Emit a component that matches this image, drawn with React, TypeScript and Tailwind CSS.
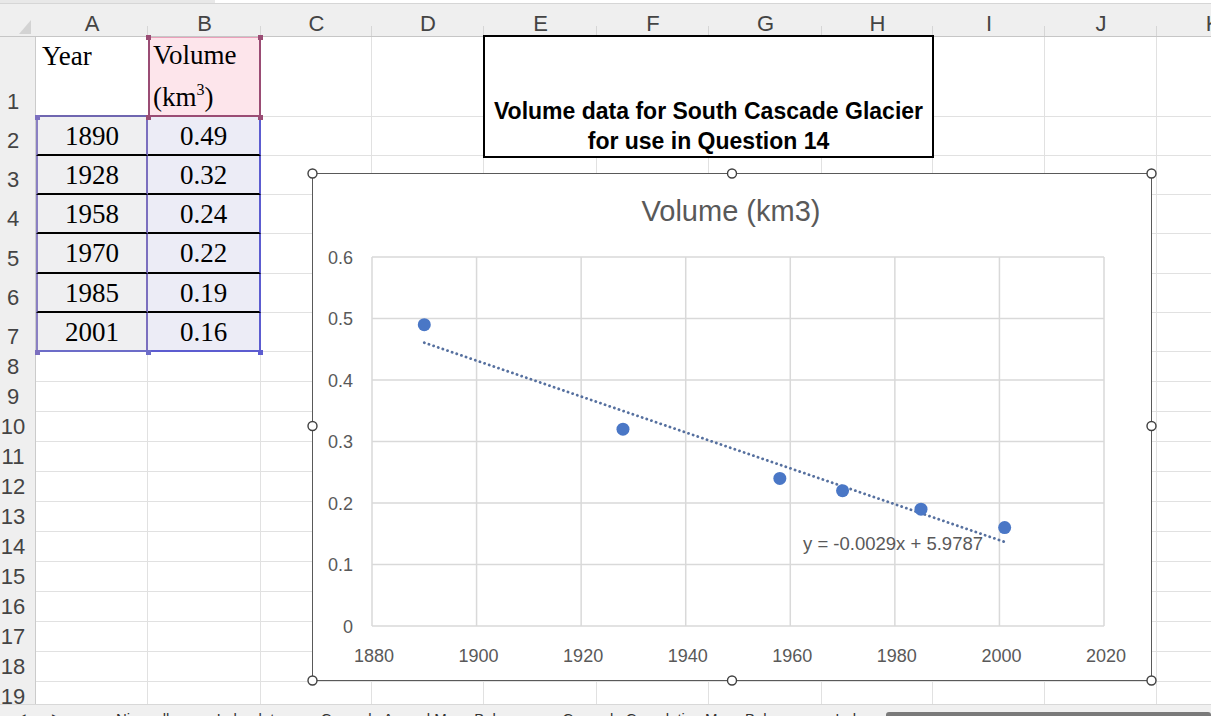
import React from "react";

const COLS = ["A", "B", "C", "D", "E", "F", "G", "H", "I", "J", "K"];
const COLW = [112, 113, 111, 112, 113, 112, 113, 111, 112, 112, 112];
const ROWH = [80, 39, 39, 39, 40, 39, 39, 30, 30, 30, 30, 30, 30, 30, 30, 30, 30, 30, 30];
const DATA = [
  ["1890", "0.49"],
  ["1928", "0.32"],
  ["1958", "0.24"],
  ["1970", "0.22"],
  ["1985", "0.19"],
  ["2001", "0.16"],
];
const POINTS: [number, number][] = [
  [1890, 0.49],
  [1928, 0.32],
  [1958, 0.24],
  [1970, 0.22],
  [1985, 0.19],
  [2001, 0.16],
];

const fx = (yr: number) => 60 + ((yr - 1880) / 140) * 732;
const fy = (v: number) => 453 - (v / 0.6) * 369;

function cellClass(r: number, c: number): string {
  if (r === 0 && c === 0) return "bg-white border-b-2 border-b-[#6f66b0]";
  if (r === 0 && c === 1)
    return "bg-[#fde5eb] border-l-2 border-l-[#9a4c74] border-r-2 border-r-[#9a4c74] border-b-2 border-b-[#9a4c74] border-t border-t-[#e9a0ba]";
  if (r >= 1 && r <= 5 && c === 0)
    return "bg-[#efeff1] border-l-2 border-l-[#8a80c2] border-r-2 border-r-[#7b6fbf] border-b-2 border-b-black";
  if (r === 6 && c === 0)
    return "bg-[#efeff1] border-l-2 border-l-[#8a80c2] border-r-2 border-r-[#7b6fbf] border-b-2 border-b-[#6c6cc8]";
  if (r >= 1 && r <= 5 && c === 1)
    return "bg-[#ececf6] border-r-2 border-r-[#5c5cd0] border-b-2 border-b-black";
  if (r === 6 && c === 1) return "bg-[#ececf6] border-r-2 border-r-[#5c5cd0] border-b-2 border-b-[#5c5cd0]";
  return "border-r border-b border-[#e1e1e1]";
}

function CellContent({ r, c }: { r: number; c: number }) {
  if (r === 0 && c === 0)
    return <div className="pl-[6px] text-[27px] leading-[40px] text-black -mt-[1px]">Year</div>;
  if (r === 0 && c === 1)
    return (
      <div className="pl-[3px] text-[27px] leading-[42px] text-black -mt-[4px]">
        <div>Volume</div>
        <div>
          (km<span className="text-[16px] relative -top-[11px]">3</span>)
        </div>
      </div>
    );
  if (r >= 1 && r <= 6 && c <= 1)
    return (
      <div className="h-full flex items-center justify-center pt-[1px] text-[27px] leading-none text-black">
        {DATA[r - 1][c]}
      </div>
    );
  return null;
}

function Chart() {
  const years = [1880, 1900, 1920, 1940, 1960, 1980, 2000, 2020];
  const vals = [0, 0.1, 0.2, 0.3, 0.4, 0.5, 0.6];
  const handles: [number, number][] = [
    [0.5, 0.5],
    [420, 0.5],
    [839.5, 0.5],
    [0.5, 253],
    [839.5, 253],
    [0.5, 507.5],
    [420, 507.5],
    [839.5, 507.5],
  ];
  return (
    <div className="absolute left-[312px] top-[173px] w-[840px] h-[508px]">
      <svg width="840" height="508" viewBox="0 0 840 508" className="overflow-visible block">
        <rect x="0.5" y="0.5" width="839" height="507" fill="#ffffff" stroke="#595959" strokeWidth="1" />
        <text
          x="419"
          y="48"
          textAnchor="middle"
          fontSize="29"
          fill="#595959"
          fontFamily="'Liberation Sans', Arial, sans-serif"
        >
          Volume (km3)
        </text>
        {years.map((y) => (
          <line key={"vx" + y} x1={fx(y)} x2={fx(y)} y1={84} y2={453} stroke="#d9d9d9" strokeWidth="1.5" />
        ))}
        {vals.map((v) => (
          <line key={"hy" + v} x1={60} x2={792} y1={fy(v)} y2={fy(v)} stroke="#d9d9d9" strokeWidth="1.5" />
        ))}
        {vals.map((v) => (
          <text
            key={"ly" + v}
            x={41}
            y={fy(v) + 6.5}
            textAnchor="end"
            fontSize="18"
            fill="#595959"
            fontFamily="'Liberation Sans', Arial, sans-serif"
          >
            {v === 0 ? "0" : v.toFixed(1)}
          </text>
        ))}
        {years.map((y) => (
          <text
            key={"lx" + y}
            x={fx(y) + 2}
            y={488.5}
            textAnchor="middle"
            fontSize="18"
            fill="#595959"
            fontFamily="'Liberation Sans', Arial, sans-serif"
          >
            {y}
          </text>
        ))}
        <line
          x1={fx(1890)}
          y1={fy(0.4607)}
          x2={fx(2001)}
          y2={fy(0.1367)}
          stroke="#56709f"
          strokeWidth="2.8"
          strokeDasharray="0.1 4.8"
          strokeLinecap="round"
        />
        {POINTS.map(([x, v]) => (
          <circle key={"p" + x} cx={fx(x)} cy={fy(v)} r="6.5" fill="#4a77c6" />
        ))}
        <text
          x={491}
          y={377}
          fontSize="18.5"
          fill="#595959"
          fontFamily="'Liberation Sans', Arial, sans-serif"
        >
          y = -0.0029x + 5.9787
        </text>
        {handles.map(([x, y], i) => (
          <circle key={"h" + i} cx={x} cy={y} r="4.5" fill="#ffffff" stroke="#404040" strokeWidth="1.4" />
        ))}
      </svg>
    </div>
  );
}

export default function App() {
  return (
    <div
      className="relative w-[1211px] h-[716px] overflow-hidden bg-white"
      style={{ fontFamily: "'Liberation Serif', 'Times New Roman', serif" }}
    >
      {/* top strip */}
      <div className="flex h-[4px] border-b border-[#d6d6d6]">
        <div className="w-[215px] bg-[#e8e8e8]" />
        <div className="flex-1 bg-white" />
      </div>
      {/* column header */}
      <div className="flex h-[33px] bg-[#efefef] border-b border-[#c6c6c6] font-['Liberation_Sans',Arial,sans-serif] text-[22px] text-[#444]">
        <div className="w-[36px] shrink-0 relative">
          <svg width="12" height="14" className="absolute left-[19px] top-[16px]" viewBox="0 0 12 14">
            <polygon points="12,0 12,14 0,14" fill="#d3d3d3" />
          </svg>
        </div>
        {COLS.map((c, i) => (
          <div
            key={c}
            className="shrink-0 relative flex items-end justify-center pb-[1px] leading-none"
            style={{ width: COLW[i] }}
          >
            {c}
            <div className="absolute right-0 bottom-0 w-px h-[10px] bg-[#d6d6d6]" />
          </div>
        ))}
      </div>
      {/* body */}
      <div className="h-[667px] overflow-hidden">
        {ROWH.map((h, r) => (
          <div key={r} className="flex" style={{ height: h }}>
            <div className="w-[36px] shrink-0 bg-[#efefef] border-r border-[#cbcbcb] flex items-end pb-[4px] font-['Liberation_Sans',Arial,sans-serif] text-[22px] leading-none text-[#444]">
              <span className="w-[26px] text-center">{r + 1}</span>
            </div>
            {COLS.map((c, ci) => (
              <div key={c} className={"shrink-0 overflow-hidden " + cellClass(r, ci)} style={{ width: COLW[ci] }}>
                <CellContent r={r} c={ci} />
              </div>
            ))}
          </div>
        ))}
      </div>
      {/* sheet tab bar */}
      <div className="relative h-[12px] bg-[#f0f0f0] border-t border-[#d8d8d8] overflow-hidden font-['Liberation_Sans',Arial,sans-serif] text-[15px] text-[#333] leading-none">
        <div className="flex items-start pt-[6px] whitespace-nowrap">
          <span className="ml-[14px]">◀</span>
          <span className="ml-[26px]">▶</span>
          <span className="ml-[52px]">Nisqually</span>
          <span className="ml-[40px]">Lake data</span>
          <span className="ml-[38px]">Cascade Annual Mass Balance</span>
          <span className="ml-[34px]">Cascade Cumulative Mass Balance</span>
          <span className="ml-[36px]">Index</span>
          <span className="ml-[14px]">+</span>
        </div>
        <div className="absolute left-[886px] top-[7px] right-0 h-[8px] rounded-[3px] bg-[#7a7a7a]" />
      </div>
      {/* title text box */}
      <div className="absolute left-[483px] top-[35px] w-[451px] h-[123px] border-2 border-black bg-white flex flex-col justify-end items-center font-['Liberation_Sans',Arial,sans-serif] font-bold text-[23px] leading-[30px] text-black">
        <div>Volume data for South Cascade Glacier</div>
        <div>for use in Question 14</div>
      </div>
      {/* range handles */}
      <div className="absolute left-[146px] top-[35px] w-[5px] h-[5px] bg-[#9a4c74]" />
      <div className="absolute left-[258px] top-[35px] w-[5px] h-[5px] bg-[#9a4c74]" />
      <div className="absolute left-[35px] top-[115px] w-[5px] h-[5px] bg-[#7b6fbf]" />
      <div className="absolute left-[146px] top-[115px] w-[5px] h-[5px] bg-[#9a4c74]" />
      <div className="absolute left-[258px] top-[115px] w-[5px] h-[5px] bg-[#9a4c74]" />
      <div className="absolute left-[35px] top-[350px] w-[5px] h-[5px] bg-[#7b6fbf]" />
      <div className="absolute left-[146px] top-[350px] w-[5px] h-[5px] bg-[#6c6cc8]" />
      <div className="absolute left-[258px] top-[350px] w-[5px] h-[5px] bg-[#5c5cd0]" />
      <Chart />
    </div>
  );
}
